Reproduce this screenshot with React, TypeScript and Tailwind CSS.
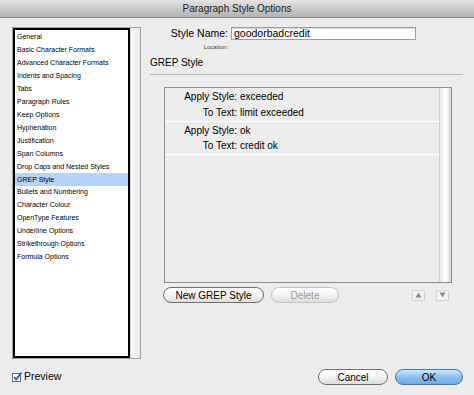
import { CSSProperties } from 'react';

const sections = [
  'General',
  'Basic Character Formats',
  'Advanced Character Formats',
  'Indents and Spacing',
  'Tabs',
  'Paragraph Rules',
  'Keep Options',
  'Hyphenation',
  'Justification',
  'Span Columns',
  'Drop Caps and Nested Styles',
  'GREP Style',
  'Bullets and Numbering',
  'Character Colour',
  'OpenType Features',
  'Underline Options',
  'Strikethrough Options',
  'Formula Options',
];

const grepStyles = [
  { style: 'exceeded', text: 'limit exceeded' },
  { style: 'ok', text: 'credit ok' },
];

const font: CSSProperties = { fontFamily: '"Liberation Sans", Arial, sans-serif' };

const AquaButton = ({ label, width, disabled }: { label: string; width: string; disabled?: boolean }) => (
  <button
    className={`${width} flex h-[16px] items-center justify-center rounded-full border bg-gradient-to-b from-white via-[#f4f4f4] to-[#dcdcdc] text-[10px] ${
      disabled ? 'border-[#c4c4c4] text-[#9a9a9a]' : 'border-[#6f6f6f] text-black'
    }`}
  >
    {label}
  </button>
);

const App = () => {
  return (
    <div className="flex h-[395px] w-[474px] flex-col bg-[#ececec] text-black" style={font}>
      <div className="flex h-[18px] items-center justify-center border-b border-[#8a8a8a] bg-gradient-to-b from-[#e4e4e4] to-[#b2b2b2] text-[10px] text-[#222]">
        Paragraph Style Options
      </div>

      <div className="flex h-[332px] gap-[9px] pl-[12px] pt-[9px] box-content">
        <div className="flex h-[332px] w-[129px] border border-[#a2a2a2] bg-[#f6f6f6]">
          <div className="flex h-full w-[117px] flex-col border-2 border-black bg-white pt-[1px]">
            {sections.map((s) => (
              <div
                key={s}
                className={`flex h-[12.95px] items-center px-[2px] text-[7px] ${
                  s === 'GREP Style' ? 'bg-[#b5d3f7]' : ''
                }`}
              >
                {s}
              </div>
            ))}
          </div>
          <div className="flex-1 border-l border-[#d8d8d8] bg-gradient-to-r from-[#fafafa] to-[#e8e8e8]" />
        </div>

        <div className="flex w-[313px] flex-col">
          <div className="flex h-[13px] items-center">
            <span className="w-[78px] text-right text-[10.5px]">Style Name:</span>
            <div className="ml-[3px] flex h-[13px] w-[185px] items-center border border-[#9c9c9c] bg-white pl-[2px] text-[10.5px] shadow-[inset_0_1px_1px_rgba(0,0,0,0.15)]">
              goodorbadcredit
            </div>
          </div>
          <div className="mt-[3px] w-[78px] text-right text-[6px] text-[#444]">Location:</div>
          <div className="mt-[3px] border-b border-[#b8b8b8] pb-[4px] text-[10px]">GREP Style</div>

          <div className="ml-[14px] mt-[12px] flex h-[196px] w-[288px] border border-[#8c8c8c] bg-[#ececec]">
            <div className="flex flex-1 flex-col">
              {grepStyles.map((g) => (
                <div key={g.style} className="flex h-[33.5px] flex-col justify-center border-b border-white text-[10px]">
                  <div className="flex h-[15.5px] items-center">
                    <span className="w-[72px] text-right">Apply Style:</span>
                    <span className="ml-[3px]">{g.style}</span>
                  </div>
                  <div className="flex h-[15.5px] items-center">
                    <span className="w-[72px] text-right">To Text:</span>
                    <span className="ml-[3px]">{g.text}</span>
                  </div>
                </div>
              ))}
            </div>
            <div className="w-[12px] border-l border-[#cfcfcf] bg-gradient-to-r from-[#e6e6e6] via-white to-[#d4d4d4]" />
          </div>

          <div className="ml-[13px] mt-[4px] flex items-center">
            <AquaButton label="New GREP Style" width="w-[101px]" />
            <div className="ml-[7px]">
              <AquaButton label="Delete" width="w-[68px]" disabled />
            </div>
            <div className="ml-[73px] flex h-[11px] w-[13px] items-center justify-center border border-[#d4d4d4] bg-[#f2f2f2]">
              <svg width="7" height="6" viewBox="0 0 7 6">
                <path d="M3.5 0.5 L6.5 5.5 L0.5 5.5 Z" fill="#8a8a8a" />
              </svg>
            </div>
            <div className="ml-[11px] flex h-[11px] w-[13px] items-center justify-center border border-[#d4d4d4] bg-[#f2f2f2]">
              <svg width="7" height="6" viewBox="0 0 7 6">
                <path d="M0.5 0.5 L6.5 0.5 L3.5 5.5 Z" fill="#8a8a8a" />
              </svg>
            </div>
          </div>
        </div>
      </div>

      <div className="mt-[10px] flex h-[16px] items-center pl-[12px] pr-[11px]">
        <svg width="10" height="10" viewBox="0 0 10 10">
          <rect x="0.5" y="1.5" width="8" height="8" fill="white" stroke="#6b6b6b" />
          <path d="M2 5 L4.2 7.6 L9.3 0.6" fill="none" stroke="#2d5fa8" strokeWidth="1.8" />
        </svg>
        <span className="ml-[2px] text-[10.5px]">Preview</span>
        <div className="ml-auto flex gap-[7px]">
          <AquaButton label="Cancel" width="w-[70px]" />
          <button className="flex h-[16px] w-[68px] items-center justify-center rounded-full border border-[#4b76ad] bg-gradient-to-b from-[#cfe6fb] via-[#8cc0ef] to-[#6aaae8] text-[10px] text-black">
            OK
          </button>
        </div>
      </div>
    </div>
  );
};

export default App;
